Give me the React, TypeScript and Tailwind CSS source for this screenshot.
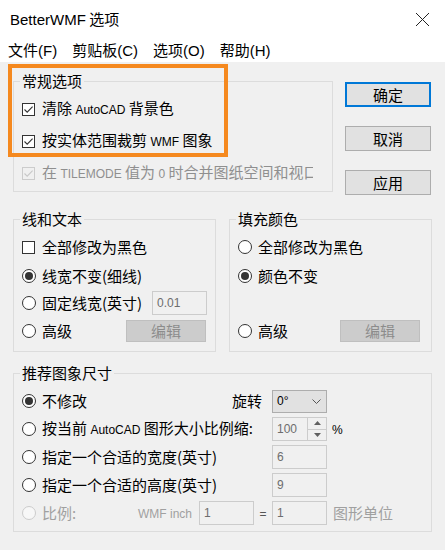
import type { ReactNode } from 'react'
import clsx from 'clsx'

function Latin({ children }: { children: ReactNode }) {
  return <span className="font-['Liberation_Sans',sans-serif] text-[12px]">{children}</span>
}

function Check({ checked, disabled }: { checked?: boolean; disabled?: boolean }) {
  return (
    <span
      className={clsx(
        'flex h-[13px] w-[13px] shrink-0 items-center justify-center border',
        disabled ? 'border-[#cccccc] bg-[#f0f0f0]' : 'border-[#333333] bg-white'
      )}
    >
      {checked && (
        <svg width="11" height="11" viewBox="0 0 11 11">
          <path d="M1.5 5.5 L4.2 8.2 L9.6 2.6" fill="none" stroke={disabled ? '#c8c8c8' : '#333333'} strokeWidth="1.1" />
        </svg>
      )}
    </span>
  )
}

function Radio({ checked, disabled }: { checked?: boolean; disabled?: boolean }) {
  return (
    <span
      className={clsx(
        'flex h-[14px] w-[14px] shrink-0 items-center justify-center rounded-full border',
        disabled ? 'border-[#cccccc] bg-[#f7f7f7]' : 'border-[#333333] bg-white'
      )}
    >
      {checked && <span className="h-[8px] w-[8px] rounded-full bg-[#333333]" />}
    </span>
  )
}

function Field({ value, className }: { value: string; className?: string }) {
  return (
    <div
      className={clsx(
        'flex h-[24px] w-[55px] items-center border border-[#cccccc] bg-[#f0f0f0] pl-[4px] text-[#6d6d6d]',
        className
      )}
    >
      <Latin>{value}</Latin>
    </div>
  )
}

function DisabledButton() {
  return (
    <div className="flex h-[22px] w-[80px] items-center justify-center border border-[#bfbfbf] bg-[#cccccc] text-[#8c8c8c]">
      编辑
    </div>
  )
}

function Group({ title, className, children }: { title: string; className?: string; children: ReactNode }) {
  return (
    <fieldset className={clsx('m-0 min-w-0 border border-[#dcdcdc] px-[8px]', className)}>
      <legend className="-ml-[2px] px-[2px] leading-[20px]">{title}</legend>
      {children}
    </fieldset>
  )
}

export default function App() {
  return (
    <div className="relative h-[550px] w-[445px] overflow-hidden bg-[#f0f0f0] font-['Noto_Sans_CJK_SC','Noto_Sans',sans-serif] text-[15px] text-black">
      {/* title bar */}
      <div className="flex h-[38px] items-center justify-between bg-white pl-[10px] pr-[15px]">
        <span className="leading-[20px]">
          <span className="font-['Liberation_Sans',sans-serif]">BetterWMF</span> 选项
        </span>
        <svg width="15" height="15" viewBox="0 0 15 15">
          <path d="M1 1 L14 14 M14 1 L1 14" stroke="#222" strokeWidth="1" />
        </svg>
      </div>

      {/* menu bar */}
      <div className="flex h-[24px] items-center gap-[15px] bg-white pl-[8px] leading-[20px]">
        <span>文件<span className="font-['Liberation_Sans',sans-serif]">(F)</span></span>
        <span>剪贴板<span className="font-['Liberation_Sans',sans-serif]">(C)</span></span>
        <span>选项<span className="font-['Liberation_Sans',sans-serif]">(O)</span></span>
        <span>帮助<span className="font-['Liberation_Sans',sans-serif]">(H)</span></span>
      </div>

      <div className="pl-[13px] pt-[9px] leading-[20px]">
        {/* top row */}
        <div className="flex items-start">
          <Group title="常规选项" className="w-[320px] pb-[7px]">
            <div className="flex flex-col gap-[10px] pt-[7px]">
              <div className="flex h-[22px] items-center gap-[7px]">
                <Check checked />
                <span>清除 <Latin>AutoCAD</Latin> 背景色</span>
              </div>
              <div className="flex h-[22px] items-center gap-[7px]">
                <Check checked />
                <span>按实体范围裁剪 <Latin>WMF</Latin> 图象</span>
              </div>
              <div className="flex h-[22px] items-center gap-[7px]">
                <Check checked disabled />
                <div className="w-[271px] overflow-hidden whitespace-nowrap text-[#8f8f8f]">
                  在 <Latin>TILEMODE</Latin> 值为 <Latin>0</Latin> 时合并图纸空间和视口
                </div>
              </div>
            </div>
          </Group>

          <div className="ml-[12px] flex flex-col gap-[19px] pt-[11px]">
            <div className="flex h-[25px] w-[86px] items-center justify-center border-2 border-[#0078d7] bg-[#e1e1e1]">确定</div>
            <div className="flex h-[25px] w-[86px] items-center justify-center border border-[#adadad] bg-[#e1e1e1]">取消</div>
            <div className="flex h-[25px] w-[86px] items-center justify-center border border-[#adadad] bg-[#e1e1e1]">应用</div>
          </div>
        </div>

        {/* line / fill row */}
        <div className="mt-[14px] flex gap-[13px]">
          <Group title="线和文本" className="w-[203px] pb-[9px]">
            <div className="flex flex-col pt-[7px]">
              <div className="flex h-[22px] items-center gap-[7px]">
                <Check />
                <span>全部修改为黑色</span>
              </div>
              <div className="mt-[7px] flex h-[22px] items-center gap-[6px]">
                <Radio checked />
                <span>线宽不变(细线)</span>
              </div>
              <div className="mt-[4px] flex h-[23px] items-center gap-[6px]">
                <Radio />
                <span>固定线宽(英寸)</span>
                <Field value="0.01" className="ml-auto h-[23px] w-[46px]" />
              </div>
              <div className="mt-[6px] flex h-[22px] items-center gap-[6px]">
                <Radio />
                <span>高级</span>
                <div className="ml-auto mr-[1px]">
                  <DisabledButton />
                </div>
              </div>
            </div>
          </Group>

          <Group title="填充颜色" className="w-[203px] pb-[9px]">
            <div className="flex flex-col pt-[7px]">
              <div className="flex h-[22px] items-center gap-[6px]">
                <Radio />
                <span>全部修改为黑色</span>
              </div>
              <div className="mt-[7px] flex h-[22px] items-center gap-[6px]">
                <Radio checked />
                <span>颜色不变</span>
              </div>
              <div className="mt-[33px] flex h-[22px] items-center gap-[6px]">
                <Radio />
                <span>高级</span>
                <div className="ml-auto mr-[3px]">
                  <DisabledButton />
                </div>
              </div>
            </div>
          </Group>
        </div>

        {/* recommended size */}
        <Group title="推荐图象尺寸" className="mt-[11px] w-[419px] pb-[6px]">
          <div className="flex flex-col gap-[4px] pt-[6px]">
            <div className="flex h-[24px] items-center">
              <div className="flex w-[250px] items-center gap-[6px]">
                <Radio checked />
                <span>不修改</span>
                <span className="ml-auto pr-[10px]">旋转</span>
              </div>
              <div className="flex h-[23px] w-[55px] items-center justify-between border border-[#adadad] bg-[#e1e1e1] pl-[4px] pr-[5px]">
                <Latin>0°</Latin>
                <svg width="9" height="5" viewBox="0 0 9 5">
                  <path d="M0.5 0.5 L4.5 4.5 L8.5 0.5" fill="none" stroke="#555" strokeWidth="1" />
                </svg>
              </div>
            </div>

            <div className="flex h-[24px] items-center">
              <div className="flex w-[250px] items-center gap-[6px]">
                <Radio />
                <span>按当前 <Latin>AutoCAD</Latin> 图形大小比例缩:</span>
              </div>
              <div className="flex h-[24px] w-[55px] items-stretch border border-[#cccccc] bg-[#f0f0f0] text-[#6d6d6d]">
                <div className="flex flex-1 items-center pl-[4px]">
                  <Latin>100</Latin>
                </div>
                <div className="flex w-[19px] flex-col border-l border-[#cccccc]">
                  <div className="flex flex-1 items-center justify-center border-b border-[#cccccc]">
                    <svg width="7" height="4" viewBox="0 0 7 4">
                      <path d="M0 4 L3.5 0 L7 4 Z" fill="#606060" />
                    </svg>
                  </div>
                  <div className="flex flex-1 items-center justify-center">
                    <svg width="7" height="4" viewBox="0 0 7 4">
                      <path d="M0 0 L3.5 4 L7 0 Z" fill="#606060" />
                    </svg>
                  </div>
                </div>
              </div>
              <span className="ml-[5px]">
                <Latin>%</Latin>
              </span>
            </div>

            <div className="flex h-[24px] items-center">
              <div className="flex w-[250px] items-center gap-[6px]">
                <Radio />
                <span>指定一个合适的宽度(英寸)</span>
              </div>
              <Field value="6" />
            </div>

            <div className="flex h-[24px] items-center">
              <div className="flex w-[250px] items-center gap-[6px]">
                <Radio />
                <span>指定一个合适的高度(英寸)</span>
              </div>
              <Field value="9" />
            </div>

            <div className="flex h-[24px] items-center text-[#a0a0a0]">
              <div className="flex w-[116px] items-center gap-[6px]">
                <Radio disabled />
                <span>比例:</span>
              </div>
              <span className="w-[61px] whitespace-nowrap">
                <Latin>WMF inch</Latin>
              </span>
              <Field value="1" />
              <span className="w-[18px] text-center text-[#555]">
                <Latin>=</Latin>
              </span>
              <Field value="1" />
              <span className="ml-[6px]">图形单位</span>
            </div>
          </div>
        </Group>
      </div>

      {/* highlight annotation */}
      <div className="pointer-events-none absolute left-[8px] top-[64px] h-[93px] w-[220px] border-4 border-[#f5891f]" />
    </div>
  )
}
